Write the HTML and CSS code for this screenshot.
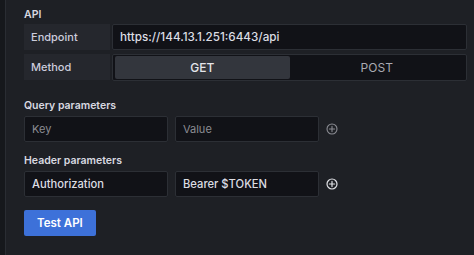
FILE: index.html
```html
<!DOCTYPE html>
<html>
<head>
<meta charset="utf-8">
<link rel="stylesheet" href="styles.css">
</head>
<body>
<div class="shell">
  <div class="panel">
    <div class="section-label api-label">API</div>
    <div class="field-row">
      <div class="row-label">Endpoint</div>
      <div class="text-input wide">https://144.13.1.251:6443/api</div>
    </div>
    <div class="field-row">
      <div class="row-label">Method</div>
      <div class="radio-group">
        <div class="seg active">GET</div>
        <div class="seg">POST</div>
      </div>
    </div>

    <div class="section-label query-label">Query parameters</div>
    <div class="param-row">
      <div class="text-input half placeholder">Key</div>
      <div class="text-input half placeholder">Value</div>
      <svg class="add-icon dim" viewBox="0 0 12 12" width="12" height="12"><circle cx="6" cy="6" r="5" fill="none" stroke="currentColor" stroke-width="1.1"/><path d="M6 3.4v5.2M3.4 6h5.2" stroke="currentColor" stroke-width="1.1" stroke-linecap="round"/></svg>
    </div>

    <div class="section-label header-label">Header parameters</div>
    <div class="param-row">
      <div class="text-input half">Authorization</div>
      <div class="text-input half">Bearer $TOKEN</div>
      <svg class="add-icon" viewBox="0 0 12 12" width="12" height="12"><circle cx="6" cy="6" r="5" fill="none" stroke="currentColor" stroke-width="1.2"/><path d="M6 3.4v5.2M3.4 6h5.2" stroke="currentColor" stroke-width="1.2" stroke-linecap="round"/></svg>
    </div>

    <button class="primary-btn">Test API</button>
  </div>
</div>
</body>
</html>
```

FILE: styles.css
```css
html, body {
  margin: 0;
  padding: 0;
  height: 100%;
}
body {
  background: #16181c;
  font-family: Inter, "Noto Sans", "Liberation Sans", sans-serif;
  color: #ccccdc;
  overflow: hidden;
}
.shell {
  height: 100%;
  padding-left: 5px;
  box-sizing: border-box;
}
.panel {
  height: 100%;
  box-sizing: border-box;
  background: #1e2025;
  border-left: 1px solid #2a2d33;
  padding: 8px 7px 0 18px;
}
.section-label {
  font-size: 10.5px;
  font-weight: 600;
  line-height: 14px;
  color: #d8d9e0;
}
.api-label {
  margin-bottom: 2px;
}
.query-label {
  margin-top: 19px;
  margin-bottom: 3px;
}
.header-label {
  margin-top: 12px;
  margin-bottom: 3px;
}
.field-row {
  display: flex;
  gap: 2px;
  height: 26px;
  margin-bottom: 4px;
}
.row-label {
  width: 86px;
  flex: none;
  background: #25272d;
  box-sizing: border-box;
  padding-left: 7px;
  display: flex;
  align-items: center;
  font-size: 11px;
  font-weight: 500;
  color: #ccccdc;
}
.text-input {
  box-sizing: border-box;
  height: 26px;
  background: #111217;
  border: 1px solid #2c2f35;
  border-radius: 2px;
  padding: 0 7px;
  display: flex;
  align-items: center;
  font-size: 11.2px;
  font-weight: 500;
  color: #dcdde3;
  white-space: nowrap;
}
.text-input.wide {
  flex: 1;
  font-size: 11.7px;
}
.text-input.placeholder {
  color: #8b8c93;
  font-size: 11px;
  font-weight: 400;
}
.radio-group {
  flex: 1;
  box-sizing: border-box;
  height: 27px;
  background: #111217;
  border: 1px solid #2c2f35;
  border-radius: 2px;
  padding: 1px 2px;
  display: flex;
}
.seg {
  flex: 1;
  display: flex;
  align-items: center;
  justify-content: center;
  font-size: 12px;
  color: #a9aab2;
  border-radius: 2px;
}
.seg.active {
  background: #33363d;
  color: #e4e5ea;
  font-weight: 500;
}
.param-row {
  display: flex;
  align-items: center;
  gap: 7px;
}
.text-input.half {
  width: 144px;
}
.add-icon {
  margin-left: 0;
  color: #e0e1e6;
}
.add-icon.dim {
  color: #8b8c93;
}
.primary-btn {
  display: block;
  margin-top: 13px;
  height: 26px;
  padding: 0 13px;
  background: #3d71d9;
  color: #ffffff;
  border: none;
  border-radius: 2px;
  font-family: inherit;
  font-size: 11.5px;
  font-weight: 600;
}
```
